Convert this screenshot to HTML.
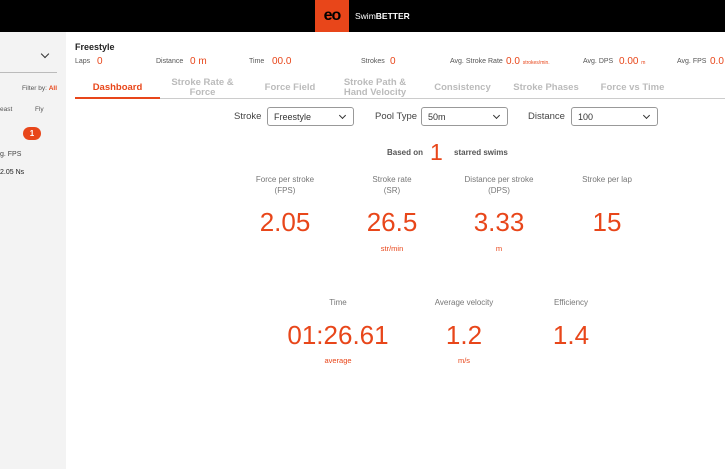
<!DOCTYPE html>
<html><head><style>
*{margin:0;padding:0;box-sizing:border-box}
body{width:725px;height:469px;overflow:hidden;background:#fff;font-family:"Liberation Sans",sans-serif;position:relative;color:#222}
.a{position:absolute;white-space:nowrap}
.o{color:#e8461a}
.g{color:#555}
.lbl{font-size:7px;color:#555}
.val{font-size:10px;color:#e8461a}
.tab{font-size:9.5px;color:#bbb;font-weight:bold;text-align:center;line-height:10px}
.sel{position:absolute;height:19px;border:1px solid #999;border-radius:3px;font-size:9px;padding:4px 6px;color:#333}
.sel:after{content:"";position:absolute;right:8px;top:5px;width:4px;height:4px;border-right:1px solid #333;border-bottom:1px solid #333;transform:rotate(45deg)}
.h{font-size:8px;color:#777;text-align:center;line-height:11px}
.big{font-size:26px;color:#e8461a;text-align:center}
.u{font-size:7.5px;color:#e8461a;text-align:center}
</style></head><body>
<div class="a" style="left:0;top:0;width:725px;height:32px;background:#000"></div>
<div class="a" style="left:315px;top:0;width:34px;height:32px;background:#e8461a"></div>
<div class="a" style="left:315px;top:7px;width:34px;text-align:center;font-size:16px;font-weight:bold;color:#000;letter-spacing:-1px">eo</div>
<div class="a" style="left:355px;top:11px;font-size:8.5px;color:#fff">Swim<b>BETTER</b></div>
<div class="a" style="left:0;top:32px;width:66px;height:437px;background:#f3f3f3"></div>
<div class="a" style="left:0;top:72px;width:57px;height:1px;background:#bbb"></div>
<div class="a" style="left:42px;top:51px;width:6px;height:6px;border-right:1.3px solid #333;border-bottom:1.3px solid #333;transform:rotate(45deg)"></div>
<div class="a" style="left:22px;top:85px;font-size:6.5px;color:#555">Filter by: <b class="o">All</b></div>
<div class="a" style="left:0;top:106px;font-size:6.5px;color:#555">east</div>
<div class="a" style="left:35px;top:106px;font-size:6.5px;color:#555">Fly</div>
<div class="a" style="left:23px;top:127px;width:18px;height:13px;border-radius:7px;background:#e8461a;color:#fff;font-size:8px;font-weight:bold;text-align:center;line-height:13px">1</div>
<div class="a" style="left:0;top:151px;font-size:7px;color:#444">g. FPS</div>
<div class="a" style="left:0;top:169px;font-size:7px;color:#222">2.05 Ns</div>

<div class="a" style="left:75px;top:42px;font-size:9px;font-weight:bold">Freestyle</div>
<div class="a lbl" style="left:75px;top:58px">Laps</div><div class="a val" style="left:97px;top:56px">0</div>
<div class="a lbl" style="left:156px;top:58px">Distance</div><div class="a val" style="left:190px;top:56px">0 m</div>
<div class="a lbl" style="left:249px;top:58px">Time</div><div class="a val" style="left:272px;top:56px">00.0</div>
<div class="a lbl" style="left:361px;top:58px">Strokes</div><div class="a val" style="left:390px;top:56px">0</div>
<div class="a lbl" style="left:450px;top:58px">Avg. Stroke Rate</div><div class="a val" style="left:506px;top:56px">0.0 <span style="font-size:5px">strokes/min.</span></div>
<div class="a lbl" style="left:583px;top:58px">Avg. DPS</div><div class="a val" style="left:619px;top:56px">0.00 <span style="font-size:5px">m</span></div>
<div class="a lbl" style="left:677px;top:58px">Avg. FPS</div><div class="a val" style="left:710px;top:56px">0.0</div>

<div class="a" style="left:75px;top:98px;width:650px;height:1px;background:#ccc"></div>
<div class="a" style="left:75px;top:97px;width:85px;height:2px;background:#e8461a"></div>
<div class="a tab o" style="left:75px;top:83px;width:85px;color:#e8461a">Dashboard</div>
<div class="a tab" style="left:165px;top:78px;width:75px">Stroke Rate &amp;<br>Force</div>
<div class="a tab" style="left:250px;top:83px;width:80px">Force Field</div>
<div class="a tab" style="left:335px;top:78px;width:80px">Stroke Path &amp;<br>Hand Velocity</div>
<div class="a tab" style="left:425px;top:83px;width:75px">Consistency</div>
<div class="a tab" style="left:508px;top:83px;width:76px">Stroke Phases</div>
<div class="a tab" style="left:595px;top:83px;width:75px">Force vs Time</div>

<div class="a" style="left:234px;top:111px;font-size:9.5px;color:#444">Stroke</div>
<div class="sel" style="left:267px;top:107px;width:87px">Freestyle</div>
<div class="a" style="left:375px;top:111px;font-size:9.5px;color:#444">Pool Type</div>
<div class="sel" style="left:421px;top:107px;width:87px">50m</div>
<div class="a" style="left:528px;top:111px;font-size:9.5px;color:#444">Distance</div>
<div class="sel" style="left:571px;top:107px;width:87px">100</div>

<div class="a" style="left:387px;top:148px;font-size:8px;font-weight:bold;color:#555">Based on</div>
<div class="a o" style="left:430px;top:139px;font-size:23px">1</div>
<div class="a" style="left:454px;top:148px;font-size:8px;font-weight:bold;color:#555">starred swims</div>

<div class="a h" style="left:235px;top:174px;width:100px">Force per stroke<br>(FPS)</div>
<div class="a h" style="left:342px;top:174px;width:100px">Stroke rate<br>(SR)</div>
<div class="a h" style="left:449px;top:174px;width:100px">Distance per stroke<br>(DPS)</div>
<div class="a h" style="left:557px;top:174px;width:100px">Stroke per lap</div>
<div class="a big" style="left:235px;top:207px;width:100px">2.05</div>
<div class="a big" style="left:342px;top:207px;width:100px">26.5</div>
<div class="a big" style="left:449px;top:207px;width:100px">3.33</div>
<div class="a big" style="left:557px;top:207px;width:100px">15</div>
<div class="a u" style="left:342px;top:244px;width:100px">str/min</div>
<div class="a u" style="left:449px;top:244px;width:100px">m</div>

<div class="a h" style="left:288px;top:297px;width:100px">Time</div>
<div class="a h" style="left:414px;top:297px;width:100px">Average velocity</div>
<div class="a h" style="left:521px;top:297px;width:100px">Efficiency</div>
<div class="a big" style="left:268px;top:320px;width:140px">01:26.61</div>
<div class="a big" style="left:414px;top:320px;width:100px">1.2</div>
<div class="a big" style="left:521px;top:320px;width:100px">1.4</div>
<div class="a u" style="left:288px;top:356px;width:100px">average</div>
<div class="a u" style="left:414px;top:356px;width:100px">m/s</div>
</body></html>
